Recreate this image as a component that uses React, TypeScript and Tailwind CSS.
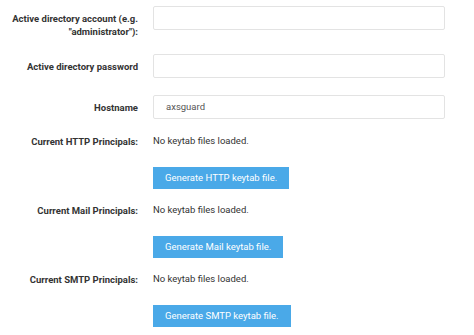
import React from 'react';

const labelCls = 'w-[138px] shrink-0 text-right font-bold text-[9.5px] leading-[13px] text-[#333]';

function Field({ label, value }: { label: React.ReactNode; value?: string }) {
  return (
    <div className="flex items-start gap-[15px]">
      <div className={labelCls + ' pt-[6px]'}>{label}</div>
      <div className="w-[292px] h-[24px] border border-[#e3e3e3] rounded-[2px] flex items-center px-[12px] text-[9.5px] text-[#555]">
        {value}
      </div>
    </div>
  );
}

function Principals({ name }: { name: string }) {
  return (
    <div className="flex flex-col">
      <div className="flex items-center gap-[15px] h-[14px]">
        <div className={labelCls}>Current {name} Principals:</div>
        <div className="text-[9.5px] text-[#333]">No keytab files loaded.</div>
      </div>
      <div className="flex pl-[153px] mt-[19px]">
        <button className="h-[22px] px-[12px] bg-[#4aa9e8] text-white text-[9.5px] leading-none">
          Generate {name} keytab file.
        </button>
      </div>
    </div>
  );
}

export default function App() {
  return (
    <div className="w-[474px] h-[335px] bg-white overflow-hidden pt-[6px]" style={{ fontFamily: 'Roboto, "Liberation Sans", sans-serif' }}>
      <Field label={<>Active directory account (e.g.<br />"administrator"):</>} />
      <div className="mt-[16px]">
        <Field label="Active directory password" />
      </div>
      <div className="mt-[17px]">
        <Field label="Hostname" value="axsguard" />
      </div>
      <div className="mt-[15px] flex flex-col gap-[14px]">
        <Principals name="HTTP" />
        <Principals name="Mail" />
        <Principals name="SMTP" />
      </div>
    </div>
  );
}
